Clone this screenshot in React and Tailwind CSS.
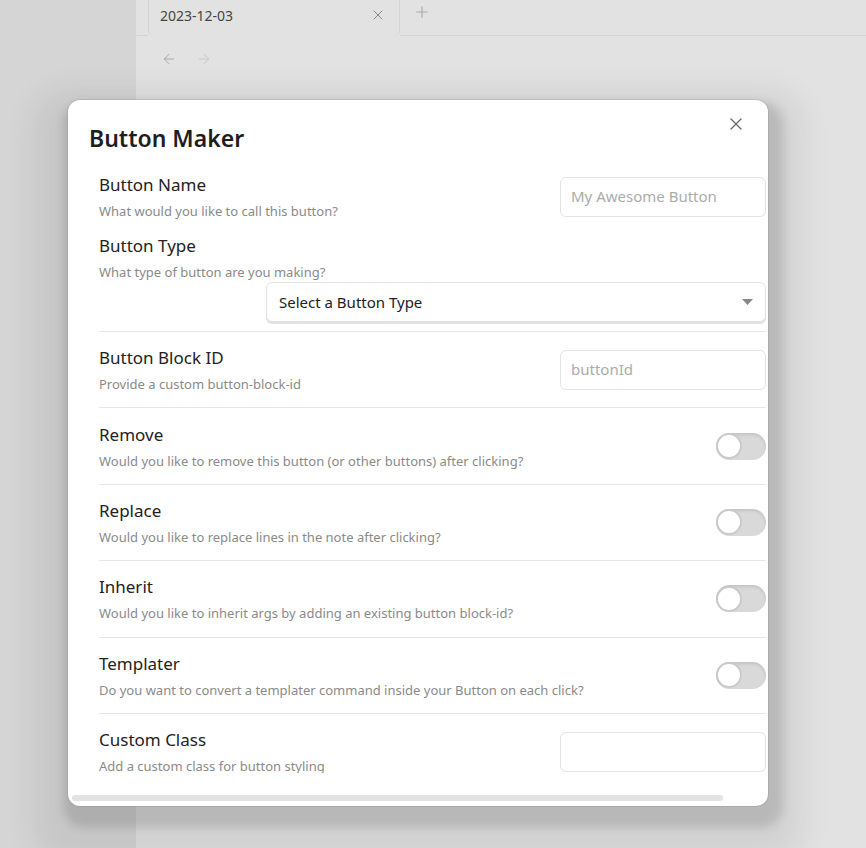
import React from 'react'
import { ArrowLeft, ArrowRight, X, Plus } from 'lucide-react'

const font = { fontFamily: '"Noto Sans", "Open Sans", sans-serif' }

const Toggle = () => (
  <div className="w-[50px] h-[27px] rounded-full bg-[#d9d9d9] shadow-[inset_0_2px_3px_rgba(0,0,0,0.1)] flex items-center shrink-0">
    <div className="w-[26px] h-[26px] rounded-full bg-white border-2 border-[#cacaca]"></div>
  </div>
)

const TextBox = ({ placeholder }) => (
  <div className="w-[206px] h-[40px] rounded-[6px] border border-[#e3e3e3] bg-white flex items-center pl-[10px] text-[15px] text-[#ababab] shrink-0">
    {placeholder}
  </div>
)

const Info = ({ name, desc }) => (
  <div className="flex-1">
    <div className="text-[17px] leading-[26px] text-[#222]">{name}</div>
    <div className="text-[13px] leading-[20px] mt-[3px] text-[#8a8a8a]">{desc}</div>
  </div>
)

const toggles = [
  ['Remove', 'Would you like to remove this button (or other buttons) after clicking?'],
  ['Replace', 'Would you like to replace lines in the note after clicking?'],
  ['Inherit', 'Would you like to inherit args by adding an existing button block-id?'],
  ['Templater', 'Do you want to convert a templater command inside your Button on each click?'],
]

export default function App() {
  return (
    <div className="relative w-[866px] h-[848px] overflow-hidden bg-[#e2e2e2] flex" style={font}>
      <div className="w-[136px] h-full bg-[#d5d5d5] shrink-0"></div>
      <div className="flex-1 flex flex-col">
        <div className="h-[36px] flex">
          <div className="w-[12px] border-b border-[#d3d3d3]"></div>
          <div className="w-[252px] h-[36px] border-l border-r border-[#d3d3d3] rounded-b-[6px] flex items-center pl-[11px] pr-[13px] pb-[6px]">
            <span className="flex-1 text-[14px] text-[#444]">2023-12-03</span>
            <X size={16} strokeWidth={1.5} className="text-[#888]" />
          </div>
          <div className="flex-1 border-b border-[#d3d3d3] flex items-start pl-[13px] pt-[3px]">
            <Plus size={18} strokeWidth={1.5} className="text-[#aaa]" />
          </div>
        </div>
        <div className="flex items-center gap-[19px] pl-[25px] pt-[15px]">
          <ArrowLeft size={16} strokeWidth={1.5} className="text-[#a8a8a8]" />
          <ArrowRight size={16} strokeWidth={1.5} className="text-[#c8c8c8]" />
        </div>
      </div>

      <div className="absolute left-[68px] top-[100px] w-[700px] h-[706px] bg-white rounded-[12px] shadow-[0_0_0_1px_rgba(0,0,0,0.07),5px_12px_10px_10px_rgba(0,0,0,0.12),0_24px_30px_36px_rgba(0,0,0,0.065)] flex flex-col">
        <button className="absolute top-[14px] right-[22px] text-[#666]">
          <X size={20} strokeWidth={1.5} />
        </button>
        <div className="pt-[22px] pl-[21px] text-[23px] leading-[32px] font-semibold text-[#1e1e1e]">Button Maker</div>
        <div className="h-[619px] overflow-hidden pl-[31px] pr-[2px]">
          <div className="flex items-center pt-[18px] pb-[12px]">
            <Info name="Button Name" desc="What would you like to call this button?" />
            <TextBox placeholder="My Awesome Button" />
          </div>
          <div className="pb-[9px]">
            <Info name="Button Type" desc="What type of button are you making?" />
            <div className="flex justify-end">
              <div className="w-[500px] h-[40px] rounded-[6px] border border-[#e3e3e3] shadow-[0_2px_0_#e3e3e3] bg-white flex items-center pl-[12px] pr-[12px]">
                <span className="flex-1 text-[15px] text-[#222]">Select a Button Type</span>
                <svg width="11" height="6" viewBox="0 0 11 6"><path d="M0 0h11L5.5 6z" fill="#888" /></svg>
              </div>
            </div>
          </div>
          <div className="flex items-center border-t border-[#e6e6e6] py-[13.2px]">
            <Info name="Button Block ID" desc="Provide a custom button-block-id" />
            <TextBox placeholder="buttonId" />
          </div>
          {toggles.map(([n, d]) => (
            <div key={n} className="flex items-center border-t border-[#e6e6e6] py-[13.2px]">
              <Info name={n} desc={d} />
              <Toggle />
            </div>
          ))}
          <div className="flex items-center border-t border-[#e6e6e6] py-[13.2px]">
            <Info name="Custom Class" desc="Add a custom class for button styling" />
            <TextBox placeholder="" />
          </div>
        </div>
        <div className="pl-[4px] pt-[22px]">
          <div className="w-[651px] h-[6px] rounded-full bg-[#e3e3e3]"></div>
        </div>
      </div>
    </div>
  )
}
